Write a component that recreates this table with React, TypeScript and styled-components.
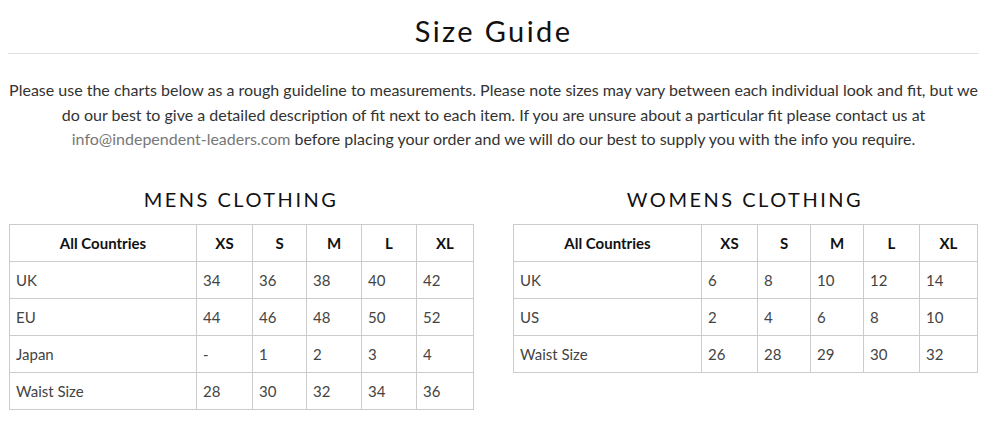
import React, { FC } from "react";
import styled, { createGlobalStyle } from "styled-components";

const GlobalStyle = createGlobalStyle`
    body {
        margin: 0;
        background: #fff;
        font-family: "Lato", "Open Sans", sans-serif;
        color: #333;
    }
`;

const StyledPage = styled.div`
    padding: 0 9px 0 8px;
    width: 988px;
    box-sizing: border-box;
`;

const StyledTitle = styled.h1`
    margin: 0;
    padding-top: 14px;
    height: 39px;
    font-size: 29px;
    font-weight: 400;
    letter-spacing: 2.4px;
    text-align: center;
    color: #111;
    border-bottom: 1px solid #e2e2e2;
    line-height: 34px;
`;

const StyledIntro = styled.p`
    margin: 24px 0 0;
    font-size: 16px;
    line-height: 24.5px;
    text-align: center;
    color: #333;
`;

const StyledMail = styled.span`
    color: #777;
`;

const StyledCharts = styled.div`
    display: flex;
    gap: 40px;
    margin-top: 34px;
    padding-left: 1px;
`;

const StyledChart = styled.div`
    width: 464px;
`;

const StyledChartTitle = styled.h2`
    margin: 0 0 12px;
    font-size: 20px;
    font-weight: 400;
    letter-spacing: 2.5px;
    text-align: center;
    line-height: 26px;
    color: #111;
`;

const StyledTable = styled.table`
    width: 100%;
    border-collapse: collapse;
    table-layout: fixed;
    font-size: 15px;
`;

const StyledHead = styled.th`
    height: 36px;
    border: 1px solid #ccc;
    font-weight: 700;
    color: #111;
    text-align: center;
    padding: 0;
`;

const StyledCell = styled.td`
    height: 36px;
    border: 1px solid #ccc;
    padding: 0 6px;
    color: #444;
    text-align: left;
    white-space: nowrap;
`;

interface IChartProps {
    title: string;
    widths: number[];
    rows: string[][];
}

const SIZES = ["XS", "S", "M", "L", "XL"];

const Chart: FC<IChartProps> = ({ title, widths, rows }) => (
    <StyledChart>
        <StyledChartTitle>{title}</StyledChartTitle>
        <StyledTable>
            <colgroup>
                {widths.map((w, i) => <col key={i} style={{ width: w }} />)}
            </colgroup>
            <thead>
                <tr>
                    <StyledHead>All Countries</StyledHead>
                    {SIZES.map(s => <StyledHead key={s}>{s}</StyledHead>)}
                </tr>
            </thead>
            <tbody>
                {rows.map(r => (
                    <tr key={r[0]}>
                        {r.map((c, i) => <StyledCell key={i}>{c}</StyledCell>)}
                    </tr>
                ))}
            </tbody>
        </StyledTable>
    </StyledChart>
);

const App: FC = () => (
    <StyledPage>
        <GlobalStyle />
        <StyledTitle>Size Guide</StyledTitle>
        <StyledIntro>
            Please use the charts below as a rough guideline to measurements. Please note sizes may vary between each individual look and fit, but we
            <br />
            do our best to give a detailed description of fit next to each item. If you are unsure about a particular fit please contact us at
            <br />
            <StyledMail>info@independent-leaders.com</StyledMail> before placing your order and we will do our best to supply you with the info you require.
        </StyledIntro>
        <StyledCharts>
            <Chart
                title="MENS CLOTHING"
                widths={[187, 56, 54, 55, 55, 57]}
                rows={[
                    ["UK", "34", "36", "38", "40", "42"],
                    ["EU", "44", "46", "48", "50", "52"],
                    ["Japan", "-", "1", "2", "3", "4"],
                    ["Waist Size", "28", "30", "32", "34", "36"],
                ]}
            />
            <Chart
                title="WOMENS CLOTHING"
                widths={[188, 56, 53, 53, 56, 58]}
                rows={[
                    ["UK", "6", "8", "10", "12", "14"],
                    ["US", "2", "4", "6", "8", "10"],
                    ["Waist Size", "26", "28", "29", "30", "32"],
                ]}
            />
        </StyledCharts>
    </StyledPage>
);

export default App;
